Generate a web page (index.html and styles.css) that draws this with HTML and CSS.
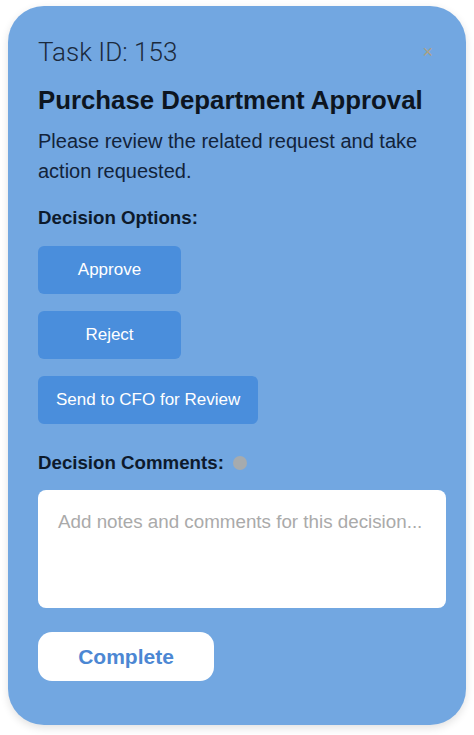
FILE: index.html
```html
<!DOCTYPE html>
<html>
<head>
<meta charset="utf-8">
<link rel="stylesheet" href="styles.css">
</head>
<body>
<div class="card">
  <div class="head">
    <div class="task-id">Task ID: 153</div>
    <div class="close">×</div>
  </div>
  <h1 class="title">Purchase Department Approval</h1>
  <p class="desc">Please review the related request and take action requested.</p>
  <div class="label">Decision Options:</div>
  <div class="options">
    <button class="opt">Approve</button>
    <button class="opt">Reject</button>
    <button class="opt">Send to CFO for Review</button>
  </div>
  <div class="label comments-label">Decision Comments:<span class="dot"></span></div>
  <textarea class="comments" placeholder="Add notes and comments for this decision..."></textarea>
  <button class="complete">Complete</button>
</div>
</body>
</html>
```
FILE: styles.css
```css
html, body {
  margin: 0;
  padding: 0;
  background: #ffffff;
  font-family: "Liberation Sans", Arial, sans-serif;
}
body {
  padding: 6px 8px 10px 8px;
}
.card {
  width: 458px;
  box-sizing: border-box;
  height: 719px;
  background: #72a7e1;
  border-radius: 36px;
  padding: 30px 29px 0 30px;
  box-shadow: 0 3px 8px rgba(0,0,0,0.12);
  display: flex;
  flex-direction: column;
  align-items: flex-start;
}
.head {
  display: flex;
  justify-content: space-between;
  align-items: center;
  width: 100%;
  height: 32px;
}
.task-id {
  font-family: "Roboto", "Liberation Sans", sans-serif;
  font-weight: 300;
  font-size: 26px;
  color: #1b2a3d;
}
.close {
  font-size: 18px;
  color: #aba184;
  margin-right: 4px;
  line-height: 1;
}
.title {
  margin: 17px 0 0 0;
  font-size: 25.8px;
  font-weight: bold;
  color: #0d1520;
  line-height: 30px;
}
.desc {
  margin: 11px 0 0 0;
  font-size: 20px;
  line-height: 30px;
  color: #13233a;
}
.label {
  margin-top: 21px;
  font-size: 18.7px;
  font-weight: bold;
  color: #0d1a2c;
  line-height: 22px;
  display: flex;
  align-items: center;
}
.options {
  display: flex;
  flex-direction: column;
  align-items: flex-start;
  gap: 17px;
  margin-top: 17px;
}
.opt {
  height: 48px;
  min-width: 143px;
  padding: 0 18px;
  border: none;
  border-radius: 6px;
  background: #4a8edc;
  color: #ffffff;
  font-family: "Liberation Sans", Arial, sans-serif;
  font-size: 17px;
}
.comments-label {
  margin-top: 28px;
}
.dot {
  display: inline-block;
  width: 14px;
  height: 14px;
  border-radius: 50%;
  background: #a6abae;
  margin-left: 9px;
}
.comments {
  margin-top: 16px;
  width: 408px;
  height: 118px;
  box-sizing: border-box;
  border: none;
  border-radius: 8px;
  background: #ffffff;
  padding: 21px 6px 21px 20px;
  font-family: "Liberation Sans", Arial, sans-serif;
  font-size: 18.8px;
  resize: none;
  outline: none;
  overflow: hidden;
}
.comments::placeholder {
  color: #aaaaaa;
}
.complete {
  margin-top: 24px;
  width: 176px;
  height: 49px;
  border: none;
  border-radius: 14px;
  background: #ffffff;
  color: #4c87d3;
  font-family: "Liberation Sans", Arial, sans-serif;
  font-size: 21px;
  font-weight: bold;
}
```
